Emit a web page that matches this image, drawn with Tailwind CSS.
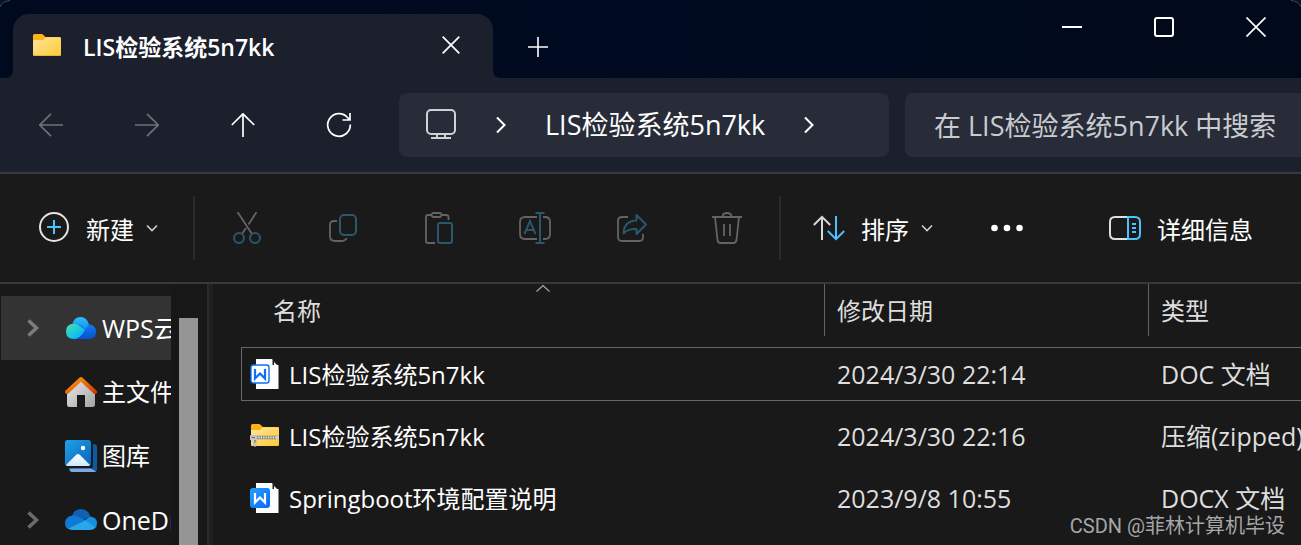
<!DOCTYPE html>
<html lang="zh-CN">
<head>
<meta charset="utf-8">
<meta name="viewport" content="width=device-width, initial-scale=1">
<title>LIS检验系统5n7kk</title>
<script src="https://cdn.jsdelivr.net/npm/@tailwindcss/browser@4"></script>
</head>
<body class="bg-[#191919] text-white font-['Open_Sans','Noto_Sans_CJK_SC',sans-serif]">
<div class="relative flex min-h-screen flex-col overflow-hidden">

  <!-- Title bar -->
  <header class="relative flex h-[78px] bg-linear-to-r from-[#000a1e] via-[#000a20] to-[#000a1a]">
    <svg class="absolute left-0 top-0" width="10" height="10" viewBox="0 0 10 10" fill="none"><path d="M0 0H10Q0 0 0 8Z" fill="#0c1420"/><path d="M0 7Q2 1 10 .5" stroke="#3f4a58"/></svg>
    <svg class="absolute right-0 top-0" width="10" height="10" viewBox="0 0 10 10" fill="none"><path d="M10 0H0Q10 0 10 8Z" fill="#0c1420"/><path d="M10 7Q8 1 0 .5" stroke="#3f4a58"/></svg>

    <div class="relative mt-[14px] ml-[13px] flex h-16 w-[480px] items-center rounded-t-2xl bg-[#1b202c] pr-6 pb-0.5 pl-5">
      <svg class="absolute -left-2 bottom-0" width="8" height="8"><path d="M8 0V8H0Q8 8 8 0Z" fill="#1b202c"/></svg>
      <svg class="absolute -right-2 bottom-0" width="8" height="8"><path d="M0 0V8H8Q0 8 0 0Z" fill="#1b202c"/></svg>
      <svg width="28" height="22" viewBox="0 0 28 22"><defs><linearGradient id="fold" x1="0" y1="0" x2="1" y2="1"><stop offset="0" stop-color="#ffe59b"/><stop offset="1" stop-color="#ffc937"/></linearGradient></defs><path d="M0 1.500Q0 0 1.500 0H8.500Q9.500 0 10.500 1L12.500 3H26.500Q28 3 28 4.500V10H0Z" fill="#fcb316"/><path d="M0 7.500Q0 6 1.500 6H9.500Q10.500 6 11.500 5L12.500 4Q13.300 3.200 14.500 3.200H26.500Q28 3.200 28 4.700V20.500Q28 22 26.500 22H1.500Q0 22 0 20.500Z" fill="url(#fold)"/><path d="M.5 21.500H27.500" stroke="#e9a92c" stroke-opacity=".7"/></svg>
      <span class="ml-[22px] flex-1 whitespace-nowrap pt-1 text-[23px] leading-8 font-semibold">LIS检验系统5n7kk</span>
      <button class="flex size-9 items-center justify-center" aria-label="关闭标签页"><svg width="18" height="18" viewBox="0 0 18 18" fill="none" stroke="#fff" stroke-width="1.700"><path d="M.7.7 17.300 17.300M17.300.7.7 17.300"/></svg></button>
    </div>
    <button class="ml-[27px] mt-[29px] flex size-9 items-center justify-center" aria-label="新建标签页"><svg width="20" height="20" viewBox="0 0 20 20" fill="none" stroke="#fff" stroke-width="1.600"><path d="M10 0V20M0 10H20"/></svg></button>
    <div class="-mr-px ml-auto flex h-[54px]">
      <button class="flex w-[92px] items-center justify-center" aria-label="最小化"><svg width="20" height="20" viewBox="0 0 20 20" stroke="#fff" stroke-width="2"><path d="M0 10H20"/></svg></button>
      <button class="flex w-[92px] items-center justify-center" aria-label="最大化"><svg width="20" height="20" viewBox="0 0 20 20" fill="none" stroke="#fff" stroke-width="2"><rect x="1" y="1" width="18" height="18" rx="2"/></svg></button>
      <button class="flex w-[92px] items-center justify-center" aria-label="关闭"><svg width="20" height="20" viewBox="0 0 20 20" fill="none" stroke="#fff" stroke-width="1.700"><path d="M.5.5 19.500 19.500M19.500.5.5 19.500"/></svg></button>
    </div>
  </header>

  <!-- Navigation bar -->
  <nav class="flex h-24 items-center border-b-2 border-[#38393c] bg-[#1b202c] pl-[3px]" aria-label="导航">
    <button class="flex h-16 w-24 items-center justify-center" aria-label="后退" disabled><svg width="24" height="24" viewBox="0 0 24 24" fill="none" stroke="#6d7179" stroke-width="1.700"><path d="M24 12H1M12 .8.8 12 12 23.200"/></svg></button>
    <button class="flex h-16 w-24 items-center justify-center" aria-label="前进" disabled><svg width="24" height="24" viewBox="0 0 24 24" fill="none" stroke="#6d7179" stroke-width="1.700"><path d="M0 12H23M12 .8 23.200 12 12 23.200"/></svg></button>
    <button class="flex h-16 w-24 items-center justify-center" aria-label="向上"><svg width="24" height="24" viewBox="0 0 24 24" fill="none" stroke="#fff" stroke-width="1.700"><path d="M12 24V1M.8 12 12 .8 23.200 12"/></svg></button>
    <button class="flex h-16 w-24 items-center justify-center" aria-label="刷新"><svg width="26" height="26" viewBox="0 0 26 26" fill="none" stroke="#fff" stroke-width="1.700"><path d="M24.300 12.500A11.300 11.300 0 1 1 21.500 5.500L23.500 7.700M24 1V8H16.500"/></svg></button>
    <div class="ml-3 flex h-16 min-w-0 flex-1 items-center rounded-lg bg-[#272c38] pl-[26px]">
      <svg class="shrink-0" width="32" height="32" viewBox="0 0 32 32" fill="none" stroke="#cfd1d4" stroke-width="2"><rect x="2" y="1" width="28" height="24" rx="4"/><path d="M12 25V29M20 25V29M6 29H26"/></svg>
      <svg class="ml-[38px] shrink-0" width="12" height="18" viewBox="0 0 12 18" fill="none" stroke="#fff" stroke-width="2"><path d="M2 1.500 9.500 9 2 16.500"/></svg>
      <a href="#" class="ml-[38px] whitespace-nowrap text-[27px] leading-9">LIS检验系统5n7kk</a>
      <svg class="ml-[38px] shrink-0" width="12" height="18" viewBox="0 0 12 18" fill="none" stroke="#fff" stroke-width="2"><path d="M2 1.500 9.500 9 2 16.500"/></svg>
    </div>
    <input type="search" aria-label="搜索" placeholder="在 LIS检验系统5n7kk 中搜索" class="ml-4 h-16 w-[396px] rounded-l-lg bg-[#272c38] pl-[29px] text-[27px] text-white outline-none placeholder:text-[#c9cbcf]">
  </nav>

  <!-- Command bar -->
  <div class="flex h-[110px] items-center border-b-2 border-[#383838] bg-[#1a1a1a] text-[24px] leading-8" role="toolbar" aria-label="命令">
    <button class="flex h-16 w-[193px] items-center pl-[38px] whitespace-nowrap">
      <svg width="32" height="32" viewBox="0 0 32 32" fill="none"><circle cx="16" cy="15" r="14" stroke="#e4e4e4" stroke-width="2"/><path d="M16 8V22M9 15H23" stroke="#4cc2ff" stroke-width="2"/></svg>
      <span class="ml-4 pt-1">新建</span>
      <svg class="ml-3" width="12" height="8" viewBox="0 0 12 8" fill="none" stroke="#cfcfcf" stroke-width="1.600"><path d="M1 1.500 6 6.500 11 1.500"/></svg>
    </button>
    <span class="mr-1 h-16 w-0.5 bg-[#2b2b2b]"></span>
    <button class="flex h-16 w-24 items-center justify-center" aria-label="剪切" disabled><svg width="32" height="32" viewBox="0 0 32 32" fill="none" stroke="#646464" stroke-width="1.800"><path d="M6.500 0 21 22M25.500 0 17.500 12.500M15 16 11 22"/><g stroke="#2b566c" stroke-width="2"><circle cx="8" cy="26" r="5"/><circle cx="24" cy="26" r="5"/></g></svg></button>
    <button class="flex h-16 w-24 items-center justify-center" aria-label="复制" disabled><svg width="32" height="32" viewBox="0 0 32 32" fill="none" stroke="#646464" stroke-width="1.800"><path d="M10 9H7Q3 9 3 13V24Q3 29 8 29H14Q18.500 29 19.500 26"/><rect x="13" y="3" width="16" height="20" rx="4" stroke="#2b566c" stroke-width="2"/></svg></button>
    <button class="flex h-16 w-24 items-center justify-center" aria-label="粘贴" disabled><svg width="32" height="32" viewBox="0 0 32 32" fill="none" stroke="#646464" stroke-width="1.800"><path d="M8 3H5Q3 3 3 5V29Q3 31 5 31H12M19 3H23Q25.500 3 25.500 5V8"/><rect x="8.500" y="1" width="10" height="4" rx="2"/><rect x="15" y="11" width="14" height="20" rx="2" stroke="#2b566c" stroke-width="2"/></svg></button>
    <button class="flex h-16 w-24 items-center justify-center" aria-label="重命名" disabled><svg width="32" height="32" viewBox="0 0 32 32" fill="none" stroke="#646464" stroke-width="1.800"><path d="M18 5H6Q1 5 1 10V22Q1 27 6 27H18M24 5H26Q31 5 31 10V22Q31 27 26 27H24"/><g stroke="#2b566c" stroke-width="2"><path d="M21 1V31M16.500 1H25.500M16.500 31H25.500M5.500 22 11 9 16.500 22M7.500 18H14.500"/></g></svg></button>
    <button class="flex h-16 w-24 items-center justify-center" aria-label="共享" disabled><svg width="32" height="32" viewBox="0 0 32 32" fill="none" stroke="#646464" stroke-width="1.800"><path d="M13 5H7Q3 5 3 9V25Q3 29 7 29H24Q28 29 28 25V22"/><path d="M21.500 3 31 12.500 21.500 22V17Q13 16.500 8.500 21.500Q9 9 21.500 8.500Z" stroke="#2b566c" stroke-width="2" stroke-linejoin="round"/></svg></button>
    <button class="flex h-16 w-24 items-center justify-center" aria-label="删除" disabled><svg width="32" height="32" viewBox="0 0 32 32" fill="none" stroke="#646464" stroke-width="1.800"><path d="M1 5H31M11.500 5Q11.500 1 16 1T20.500 5M4 5 6.500 28Q7 31 9.500 31H22.500Q25 31 25.500 28L28 5M13 12V24M19 12V24"/></svg></button>
    <span class="ml-1 h-16 w-0.5 bg-[#2b2b2b]"></span>
    <button class="flex h-16 items-center pr-6 pl-8 whitespace-nowrap">
      <svg width="32" height="32" viewBox="0 0 32 32" fill="none" stroke-width="2"><path d="M9 28V5M.8 13 9 4.800 17.200 13" stroke="#d8d8d8"/><path d="M23 4V27M14.800 19 23 27.200 31.200 19" stroke="#4cc2ff"/></svg>
      <span class="ml-4 pt-1">排序</span>
      <svg class="ml-3" width="12" height="8" viewBox="0 0 12 8" fill="none" stroke="#cfcfcf" stroke-width="1.600"><path d="M1 1.500 6 6.500 11 1.500"/></svg>
    </button>
    <button class="flex h-16 w-[100px] items-center justify-center" aria-label="更多"><svg width="32" height="8" viewBox="0 0 32 8" fill="#fff"><circle cx="3.500" cy="4" r="3.300"/><circle cx="16" cy="4" r="3.300"/><circle cx="28.500" cy="4" r="3.300"/></svg></button>
    <button class="ml-auto flex h-16 items-center pr-12 whitespace-nowrap">
      <svg width="32" height="32" viewBox="0 0 32 32" fill="none" stroke-width="2"><path d="M19 5H6Q1 5 1 10V22Q1 27 6 27H19" stroke="#dedede"/><path d="M19 5H26Q31 5 31 10V22Q31 27 26 27H19ZM23 12H27M23 16H27M23 20H27" stroke="#4cc2ff"/></svg>
      <span class="ml-4 pt-1">详细信息</span>
    </button>
  </div>

  <!-- Content -->
  <main class="flex h-[261px] flex-1 overflow-hidden">
    <aside class="flex w-[213px] shrink-0">
      <ul class="w-[171px] overflow-hidden pt-3 pl-px text-[24px] leading-8 whitespace-nowrap">
        <li><a href="#" class="flex h-16 items-center bg-[#333] pl-6">
          <svg class="shrink-0" width="16" height="20" viewBox="0 0 16 20" fill="none" stroke="#7c7c7c" stroke-width="3.500"><path d="M3.500 2.500 11.500 10 3.500 17.500"/></svg>
          <svg class="ml-6 shrink-0" width="32" height="32" viewBox="0 0 32 32"><defs><linearGradient id="c1" x1="0" y1="0" x2="0" y2="1"><stop offset="0" stop-color="#2fc0f8"/><stop offset="1" stop-color="#158bf6"/></linearGradient><linearGradient id="c2" x1="0" y1="0" x2="1" y2="1"><stop offset="0" stop-color="#4ae59e"/><stop offset=".6" stop-color="#14c3ee"/><stop offset="1" stop-color="#0a9df5"/></linearGradient><linearGradient id="c3" x1="0" y1="0" x2="0" y2="1"><stop offset="0" stop-color="#0b7ff2"/><stop offset="1" stop-color="#0a4fd0"/></linearGradient></defs><path d="M10 27 20 12H23Q31 13 31 20Q31 27 24 27Z" fill="url(#c3)"/><path d="M7.500 12Q9 5 15.500 5Q22 5 24 12.500L20 17.500Q14 11 7.500 12Z" fill="url(#c1)"/><path d="M9 11.500Q13 11.500 16 14.500L20 18Q15 27 9 27Q1 27 1 19.500Q1 12 9 11.500Z" fill="url(#c2)"/></svg>
          <span class="ml-[5px] text-[25px]">WPS云盘</span></a></li>
        <li><a href="#" class="flex h-16 items-center pl-16">
          <svg class="shrink-0" width="32" height="32" viewBox="0 0 32 32"><defs><linearGradient id="h1" x1="0" y1="0" x2="1" y2="1"><stop offset="0" stop-color="#ececec"/><stop offset="1" stop-color="#a2a2a2"/></linearGradient><linearGradient id="h2" x1="0" y1="0" x2="1" y2="1"><stop offset="0" stop-color="#fb9d10"/><stop offset="1" stop-color="#d83b01"/></linearGradient></defs><path d="M2 14 16 3 30 14V28.500Q30 31 27.500 31H20V19H12V31H4.500Q2 31 2 28.500Z" fill="url(#h1)"/><path d="M2 16 16 3 30 16" fill="none" stroke="url(#h2)" stroke-width="4" stroke-linecap="round" stroke-linejoin="round"/></svg>
          <span class="ml-[5px]">主文件夹</span></a></li>
        <li><a href="#" class="flex h-16 items-center pl-16">
          <svg class="shrink-0" width="32" height="32" viewBox="0 0 32 32"><defs><linearGradient id="g1" x1="0" y1="0" x2="1" y2="1"><stop offset="0" stop-color="#1fa2e8"/><stop offset="1" stop-color="#0a62bb"/></linearGradient><linearGradient id="g2" x1="0" y1="0" x2="0" y2="1"><stop offset="0" stop-color="#fff"/><stop offset="1" stop-color="#cfe7fb"/></linearGradient></defs><path d="M28 4Q32 4 32 7V29Q32 32 29 32H7Q4 32 4 28.500H26Q28 28.500 28 26Z" fill="#0a5aa8"/><path d="M4.500 28.500H26L31 31.500Q30 32 29 32H7Q5 32 4.500 28.500Z" fill="#7fa9dc"/><rect width="26" height="26" rx="2.500" fill="url(#g1)"/><circle cx="18" cy="8" r="2.200" fill="#fff"/><path d="M1 25 11.500 14.500Q13 13.300 14.500 14.500L25 25Q24 26 23.500 26H2.500Q1.500 26 1 25Z" fill="url(#g2)"/></svg>
          <span class="ml-[5px]">图库</span></a></li>
        <li><a href="#" class="flex h-16 items-center pl-6">
          <svg class="shrink-0" width="16" height="20" viewBox="0 0 16 20" fill="none" stroke="#6c6c6c" stroke-width="3.500"><path d="M3.500 2.500 11.500 10 3.500 17.500"/></svg>
          <svg class="ml-6 shrink-0" width="32" height="32" viewBox="0 0 32 32"><path d="M7 12Q9 5 16 5Q23 5 25.500 12.500L16 17Z" fill="#0f5fb5"/><path d="M8 11.500Q11.500 11 15 13.500L21 17 3 25Q0 23 0 19Q0 12.500 8 11.500Z" fill="#1079d6"/><path d="M20 16 25 12.500Q32 13 32 19.500Q32 23 29.500 24.500L19 17Z" fill="#1490df"/><path d="M3 24.500 20.500 16.500 30.500 23.500Q28.500 26 25 26H8Q5 26 3 24.500Z" fill="#28a8ea"/></svg>
          <span class="ml-[5px] text-[25px]">OneDrive</span></a></li>
      </ul>
      <div class="flex w-9 justify-center bg-[#171717] pt-[34px] pr-px"><div class="w-[19px] bg-[#959595]"></div></div>
      <div class="w-0.5 bg-[#2b2b2b]"></div>
      <div class="w-1 bg-[#202020]"></div>
    </aside>

    <div class="min-w-0 flex-1 overflow-hidden pl-7">
      <table class="-mt-2 w-full table-fixed border-separate border-spacing-x-0 border-spacing-y-2 text-left text-[24px] leading-8 whitespace-nowrap text-[#dedede]">
        <thead>
          <tr class="h-[55px] align-top">
            <th scope="col" class="relative w-[55%] p-0 font-normal" aria-sort="ascending">
              <svg class="absolute top-0 left-1/2" width="20" height="9" viewBox="0 0 20 9" fill="none" stroke="#a8a8a8" stroke-width="1.200"><path d="M3.500 7.500 10 1.500 16.500 7.500"/></svg>
              <div class="flex h-[52px] items-center pt-0.5 pl-8">名称</div></th>
            <th scope="col" class="w-[324px] p-0 font-normal"><div class="flex h-[52px] items-center border-l border-[#636363] pt-0.5 pl-3">修改日期</div></th>
            <th scope="col" class="p-0 font-normal"><div class="flex h-[52px] items-center border-l border-[#636363] pt-0.5 pl-3">类型</div></th>
          </tr>
        </thead>
        <tbody>
          <tr class="h-[54px]">
            <td class="border border-r-0 border-[#686868] p-0 pl-2 text-white"><a href="#" class="flex items-center">
              <svg class="shrink-0" width="30" height="32" viewBox="0 0 30 32"><path d="M6 1H22L28.500 7.500V31H6Z" fill="#fdfdff"/><path d="M22.500 1V7H28.500Z" fill="#1a1f2c"/><path d="M24 4 27.500 7.500H24Z" fill="#fff"/><rect x="1" y="7" width="18" height="18" rx="2.500" fill="#fff" stroke="#0d6efd" stroke-width="1.400"/><path d="M5 11V20.500L10 15.500 15 20.500V11" fill="none" stroke="#0d6efd" stroke-width="2.200"/></svg>
              <span class="ml-[9px] pt-0.5">LIS检验系统5n7kk</span></a></td>
            <td class="border-y border-[#686868] p-0 pl-[13px] text-[25px]">2024/3/30 22:14</td>
            <td class="border-y border-[#686868] p-0 pl-[13px] text-[25px]">DOC 文档</td>
          </tr>
          <tr class="h-[54px]">
            <td class="p-0 pl-[9px] text-white"><a href="#" class="flex items-center">
              <svg class="shrink-0" width="30" height="32" viewBox="0 0 30 32"><path d="M1 6Q1 4 2.500 4H9.500L13 7H28Q29 7 29 8.500V14H1Z" fill="#fcb316"/><path d="M1 10H10L13 7.200H28Q29 7.200 29 8.500V24.500Q29 26 28 26H2Q1 26 1 24.500Z" fill="url(#fold)"/><path d="M5 17.500H29" stroke="#8d8b83" stroke-width="3.600"/><path d="M6 17.500H27" stroke="#eee9d8" stroke-width="2" stroke-dasharray="1.200 1.200"/><rect x="26" y="16" width="3" height="3.500" fill="#cfcfcf"/><path d="M0 16Q0 15 1 15H7V20L6.500 26Q5 27.500 3.500 26L2.500 20H0Z" fill="#c4c4c4"/><path d="M1.500 17.500H5M5 20V22.500" stroke="#6e6e6e" stroke-width="1.200"/></svg>
              <span class="ml-[9px] pt-0.5">LIS检验系统5n7kk</span></a></td>
            <td class="p-0 pl-[13px] text-[25px]">2024/3/30 22:16</td>
            <td class="p-0 pl-[13px] text-[25px]">压缩(zipped)</td>
          </tr>
          <tr class="h-[54px]">
            <td class="p-0 pl-[9px] text-white"><a href="#" class="flex items-center">
              <svg class="shrink-0" width="30" height="32" viewBox="0 0 30 32"><defs><linearGradient id="w1" x1="0" y1="0" x2="1" y2="1"><stop offset="0" stop-color="#23a4fb"/><stop offset="1" stop-color="#0b66fb"/></linearGradient></defs><path d="M6 1H22L28.500 7.500V31H6Z" fill="#fdfdff"/><path d="M22.500 1V7H28.500Z" fill="#1a1f2c"/><path d="M24 4 27.500 7.500H24Z" fill="#fff"/><rect x="0" y="6" width="20" height="20" rx="3" fill="url(#w1)"/><path d="M5 11V20.500L10 15.500 15 20.500V11" fill="none" stroke="#fff" stroke-width="2.200"/></svg>
              <span class="ml-[9px] pt-0.5">Springboot环境配置说明</span></a></td>
            <td class="p-0 pl-[13px] text-[25px]">2023/9/8 10:55</td>
            <td class="p-0 pl-[13px] text-[25px]">DOCX 文档</td>
          </tr>
        </tbody>
      </table>
    </div>
  </main>

  <p class="absolute right-4 bottom-3 font-['Roboto','Noto_Sans_CJK_SC',sans-serif] text-[20px] leading-7 text-[#a6a6a6]">CSDN @菲林计算机毕设</p>
</div>
</body>
</html>
